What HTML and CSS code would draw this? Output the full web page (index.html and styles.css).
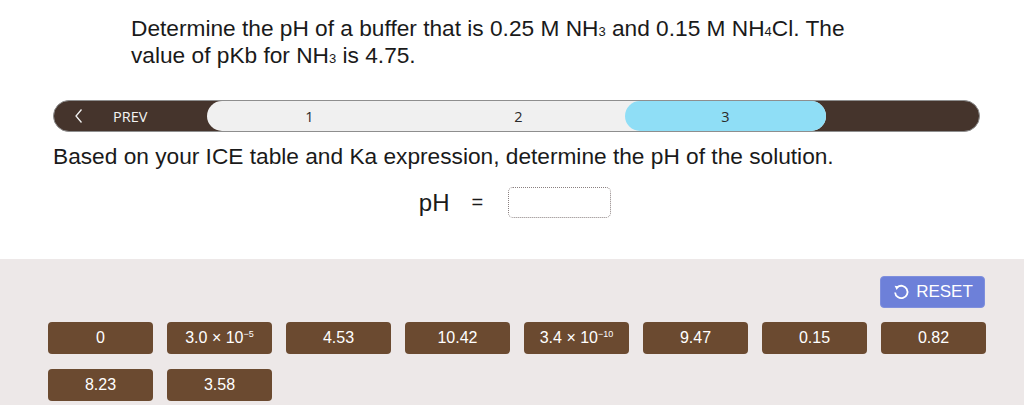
FILE: index.html
```html
<!DOCTYPE html>
<html>
<head>
<meta charset="utf-8">
<link rel="stylesheet" href="styles.css">
</head>
<body>
<div class="question">
  <p class="prompt">Determine the pH of a buffer that is 0.25 M NH<span class="sub">3</span> and 0.15 M NH<span class="sub">4</span>Cl. The value of pKb for NH<span class="sub">3</span> is 4.75.</p>
</div>
<div class="nav">
  <div class="prev">
    <svg class="chev" width="10" height="16" viewBox="0 0 10 16"><path d="M7.5 1.5 L2 8 L7.5 14.5" fill="none" stroke="#f2f2f2" stroke-width="1.3"/></svg>
    <span class="prev-label">PREV</span>
  </div>
  <div class="track">
    <div class="seg seg-1">1</div>
    <div class="seg seg-2">2</div>
    <div class="seg seg-3 active">3</div>
  </div>
</div>
<p class="instruction">Based on your ICE table and Ka expression, determine the pH of the solution.</p>
<div class="answer">
  <span class="lhs">pH</span>
  <span class="eq">=</span>
  <span class="box"></span>
</div>
<div class="panel">
  <div class="toolbar">
    <button class="reset">
      <svg width="18" height="18" viewBox="0 0 18 18"><path d="M5.2 4.3 A6.2 6.2 0 1 1 3.1 9.5" fill="none" stroke="#fff" stroke-width="1.8"/><path d="M2.6 2.8 L7 3.4 L4.6 7 Z" fill="#fff"/></svg>
      <span>RESET</span>
    </button>
  </div>
  <div class="choices">
    <button class="chip">0</button>
    <button class="chip">3.0 × 10<sup>−5</sup></button>
    <button class="chip">4.53</button>
    <button class="chip">10.42</button>
    <button class="chip">3.4 × 10<sup>−10</sup></button>
    <button class="chip">9.47</button>
    <button class="chip">0.15</button>
    <button class="chip">0.82</button>
    <button class="chip">8.23</button>
    <button class="chip">3.58</button>
  </div>
</div>
</body>
</html>
```
FILE: styles.css
```css
html, body {
  margin: 0;
  padding: 0;
  background: #ffffff;
}
body {
  font-family: "Liberation Sans", Arial, sans-serif;
  color: #1a1a1a;
  width: 1024px;
  height: 405px;
  overflow: hidden;
}
.question {
  padding: 15px 0 0 131px;
  width: 740px;
}
.prompt {
  margin: 0;
  font-size: 22.7px;
  line-height: 27px;
}
.sub {
  font-size: 13px;
  line-height: 1;
  vertical-align: baseline;
}
.nav {
  margin: 31px 0 0 53px;
  width: 925px;
  height: 30px;
  background: #45342c;
  border: 1px solid #8e8e8e;
  border-radius: 16px;
  display: flex;
  align-items: stretch;
  font-family: "Open Sans", "Noto Sans", sans-serif;
  font-size: 14.5px;
}
.prev {
  width: 153px;
  display: flex;
  align-items: center;
  padding-left: 20px;
  box-sizing: border-box;
  color: #f4f4f4;
}
.chev {
  margin-right: 29px;
}
.track {
  width: 619px;
  display: flex;
  background: #f0f0f0;
  border-radius: 15px;
}
.seg {
  display: flex;
  align-items: center;
  justify-content: center;
  color: #2a2a2a;
  border-radius: 15px;
}
.seg-1 { width: 205px; }
.seg-2 { width: 213px; }
.seg-3 { width: 201px; }
.seg.active {
  background: #8fdef6;
}
.instruction {
  margin: 11px 0 0 53px;
  font-size: 22.7px;
  line-height: 26px;
}
.answer {
  display: flex;
  justify-content: center;
  align-items: center;
  margin-top: 18px;
  padding-left: 6px;
  font-size: 24px;
}
.eq {
  margin-left: 22px;
  font-size: 20px;
}
.box {
  margin-left: 25px;
  width: 101px;
  height: 29px;
  border: 1px dotted #8a8080;
  border-radius: 5px;
}
.panel {
  margin-top: 41px;
  background: #ede8e8;
  height: 146px;
  padding: 17px 39px 0 48px;
  box-sizing: border-box;
}
.toolbar {
  display: flex;
  justify-content: flex-end;
}
.reset {
  width: 105px;
  height: 32px;
  background: #6d80d9;
  border: 1px solid #7f8fdd;
  border-radius: 4px;
  color: #ffffff;
  display: flex;
  align-items: center;
  justify-content: center;
  gap: 6px;
  font-family: "Liberation Sans", Arial, sans-serif;
  font-size: 17px;
  padding: 0;
}
.choices {
  margin-top: 14px;
  display: grid;
  grid-template-columns: repeat(8, 105px);
  column-gap: 14px;
  row-gap: 15px;
}
.chip {
  height: 32px;
  background: #6b4a30;
  border: none;
  border-radius: 4px;
  color: #ffffff;
  font-family: "Liberation Sans", Arial, sans-serif;
  font-size: 16px;
  padding: 0;
}
.chip sup {
  font-size: 9px;
  vertical-align: 6px;
  line-height: 0;
}
```
